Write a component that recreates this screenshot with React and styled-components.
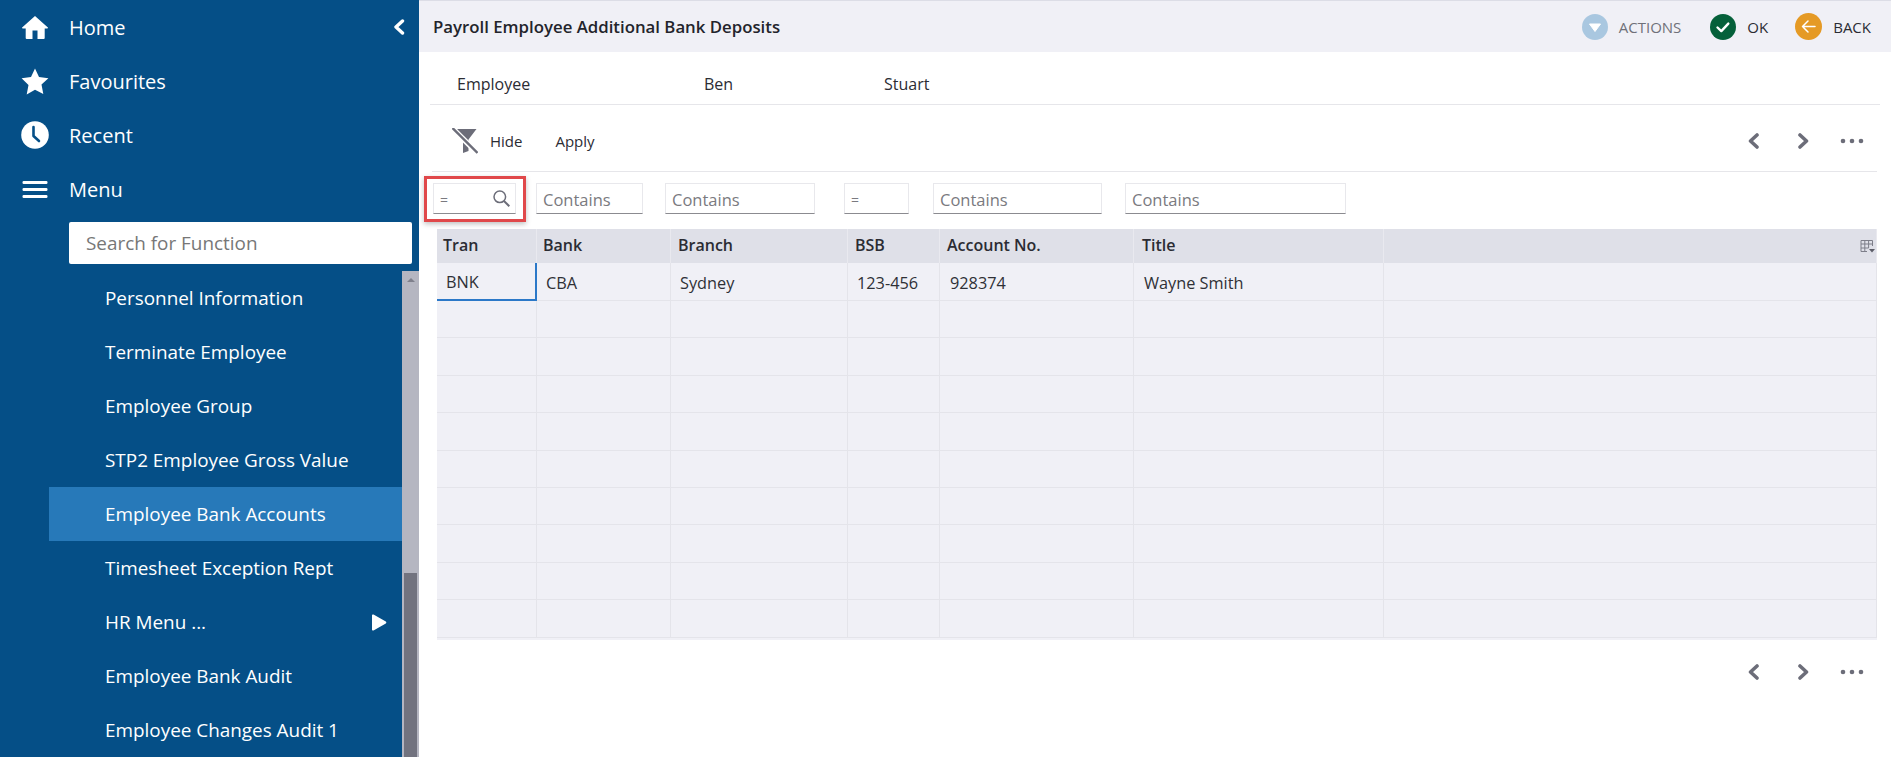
import React from "react";
import styled, { createGlobalStyle } from "styled-components";

const Global = createGlobalStyle`
  html, body { margin: 0; padding: 0; background: #fff; }
  body { font-family: "Open Sans", "Liberation Sans", sans-serif; color: #2b2c33; overflow: hidden; }
  * { box-sizing: border-box; }
`;

const Page = styled.div`
  display: flex;
  width: 1896px;
  height: 757px;
  overflow: hidden;
  background: #fff;
`;

const Sidebar = styled.aside`
  width: 419px;
  flex: none;
  background: #054f87;
  color: #fff;
  display: flex;
  flex-direction: column;
`;

const NavRow = styled.div`
  height: 54px;
  flex: none;
  display: flex;
  align-items: center;
  font-size: 20px;
  padding-left: 22px;
  padding-right: 14px;
`;

const NavIcon = styled.span`
  width: 47px;
  flex: none;
  display: flex;
  align-items: center;
  svg { display: block; }
`;

const Collapse = styled.span`
  margin-left: auto;
  display: flex;
`;

const SearchBox = styled.div`
  margin: 6px 7px 7px 69px;
  height: 42px;
  flex: none;
  background: #fff;
  border-radius: 2px;
  color: #777;
  font-size: 18.9px;
  display: flex;
  align-items: center;
  padding-left: 17px;
`;

const MenuArea = styled.div`
  flex: 1;
  display: flex;
  min-height: 0;
  padding-left: 49px;
`;

const MenuList = styled.div`
  flex: 1;
  display: flex;
  flex-direction: column;
`;

const MenuItem = styled.div`
  height: 54px;
  flex: none;
  display: flex;
  align-items: center;
  padding: 0 15px 0 56px;
  font-size: 18.9px;
  background: ${(p) => (p.$active ? "#2779b9" : "transparent")};
`;

const Arrow = styled.span`
  margin-left: auto;
  display: flex;
`;

const ScrollTrack = styled.div`
  width: 17px;
  flex: none;
  background: #b5b6c1;
  display: flex;
  flex-direction: column;
  align-items: center;
  padding-top: 7px;
`;

const ScrollUp = styled.span`
  width: 0;
  height: 0;
  border-left: 4px solid transparent;
  border-right: 4px solid transparent;
  border-bottom: 4px solid #7f808c;
`;

const ScrollThumb = styled.div`
  width: 13px;
  margin-top: auto;
  height: 184px;
  background: #72737f;
`;

const Main = styled.main`
  flex: 1;
  min-width: 0;
  position: relative;
  display: flex;
  flex-direction: column;
`;

const Header = styled.header`
  width: 1472px;
  height: 52px;
  flex: none;
  background: #f0f0f6;
  border-top: 1px solid #dcdde6;
  display: flex;
  align-items: center;
  padding: 0 20px 0 14px;
`;

const Title = styled.h1`
  margin: 0;
  font-size: 16.8px;
  font-weight: 600;
  color: #23242b;
`;

const Actions = styled.div`
  margin-left: auto;
  display: flex;
  align-items: center;
`;

const ActionButton = styled.div`
  display: flex;
  align-items: center;
  gap: 11px;
  margin-left: ${(p) => p.$gap || 0}px;
  font-size: 15px;
  color: ${(p) => (p.$muted ? "#6f7079" : "#2b2c33")};
  svg { display: block; }
`;

const InfoRow = styled.div`
  height: 53px;
  flex: none;
  margin: 0 16px 0 11px;
  padding-top: 11px;
  border-bottom: 1px solid #e6e6ea;
  display: flex;
  align-items: center;
  font-size: 16px;
`;

const InfoCell = styled.span`
  width: ${(p) => p.$w}px;
  padding-left: ${(p) => p.$pad || 0}px;
`;

const Toolbar = styled.div`
  height: 67px;
  flex: none;
  margin: 0 19px 0 13px;
  border-bottom: 1px solid #e6e6ea;
  display: flex;
  align-items: center;
  font-size: 15px;
  padding: 5px 0 0 20px;
`;

const ToolLabel = styled.span`
  margin-left: ${(p) => p.$gap}px;
`;

const Pager = styled.div`
  margin-left: auto;
  display: flex;
  align-items: center;
  padding-right: 13px;
  svg { display: block; }
`;

const PagerGap = styled.span`
  display: flex;
  margin-left: ${(p) => p.$gap}px;
`;

const FilterRow = styled.div`
  height: 57px;
  flex: none;
  display: flex;
  align-items: flex-start;
  padding: 11px 0 0 14px;
`;

const FilterInput = styled.div`
  width: ${(p) => p.$w}px;
  margin-left: ${(p) => p.$gap || 0}px;
  height: 31px;
  flex: none;
  border: 1px solid #e8e8ec;
  border-bottom: 1px solid #8b8b90;
  color: #7a7a80;
  font-size: ${(p) => (p.$small ? "14px" : "16.5px")};
  display: flex;
  align-items: center;
  padding: 2px 5px 0 6px;
  background: #fff;
`;

const FilterSearch = styled.span`
  margin: -3px 0 0 auto;
  display: flex;
`;

const Highlight = styled.div`
  position: absolute;
  left: 5px;
  top: 176px;
  width: 102px;
  height: 46px;
  border: 3px solid #e0484a;
  box-shadow: 0 2px 5px rgba(0, 0, 0, 0.25);
  pointer-events: none;
`;

const Table = styled.div`
  width: 1440px;
  margin-left: 18px;
  flex: none;
  display: flex;
  flex-direction: column;
  background: #f0f0f6;
  padding-bottom: 2px;
`;

const Row = styled.div`
  display: grid;
  grid-template-columns: 100px 134px 177px 92px 194px 250px 493px;
  height: ${(p) => p.$h}px;
  flex: none;
  background: ${(p) => p.$bg || "transparent"};
`;

const HeadCell = styled.div`
  border-right: 1px solid #e9e9ef;
  font-size: 16px;
  font-weight: 600;
  color: #2b2c33;
  display: flex;
  align-items: center;
  padding: 0 1px 3px ${(p) => p.$pad}px;
`;

const GridIcon = styled.span`
  margin: 3px 0 0 auto;
  display: flex;
`;

const Cell = styled.div`
  border-right: ${(p) => (p.$selected ? "2px solid #2b78c8" : "1px solid #e4e4ea")};
  border-bottom: ${(p) => (p.$selected ? "2px solid #2b78c8" : "1px solid #e4e4ea")};
  font-size: 16.3px;
  color: #2f3036;
  display: flex;
  align-items: center;
  padding: 2px 0 0 ${(p) => p.$pad || 0}px;
`;

const BottomPager = styled.div`
  width: 1440px;
  margin-left: 18px;
  margin-top: 24px;
  display: flex;
`;

const cols = [
  { title: "Tran", hp: 6, cp: 9, val: "BNK" },
  { title: "Bank", hp: 6, cp: 9, val: "CBA" },
  { title: "Branch", hp: 7, cp: 9, val: "Sydney" },
  { title: "BSB", hp: 7, cp: 9, val: "123-456" },
  { title: "Account No.", hp: 7, cp: 10, val: "928374" },
  { title: "Title", hp: 8, cp: 10, val: "Wayne Smith" },
  { title: "", hp: 0, cp: 0, val: "" },
];

const filters = [
  { w: 83, small: true, text: "=", search: true },
  { w: 107, gap: 20, text: "Contains" },
  { w: 150, gap: 22, text: "Contains" },
  { w: 65, gap: 29, small: true, text: "=" },
  { w: 169, gap: 24, text: "Contains" },
  { w: 221, gap: 23, text: "Contains" },
];

const menu = [
  "Personnel Information",
  "Terminate Employee",
  "Employee Group",
  "STP2 Employee Gross Value",
  "Employee Bank Accounts",
  "Timesheet Exception Rept",
  "HR Menu ...",
  "Employee Bank Audit",
  "Employee Changes Audit 1",
];

const HomeIcon = () => (
  <svg width="26" height="23" viewBox="0 0 26 23" fill="#fff">
    <path d="M13 0 25.600 11.200a.7.7 0 0 1-.5 1.300H22.700V22a1 1 0 0 1-1 1H15.500V14.500h-5V23H4.700a1 1 0 0 1-1-1V12.500H.9a.7.7 0 0 1-.5-1.300z" />
  </svg>
);

const StarIcon = () => (
  <svg width="28" height="27" viewBox="0 0 28 27" fill="#fff" style={{ marginLeft: -1 }}>
    <path d="M14 .5l4 8.500 9.400 1.200-6.900 6.400 1.800 9.300L14 21.800l-8.300 4.600 1.800-9.300L.6 10.200 10 9z" />
  </svg>
);

const ClockIcon = () => (
  <svg width="28" height="28" viewBox="0 0 28 28" style={{ marginLeft: -1 }}>
    <circle cx="14" cy="14" r="13.800" fill="#fff" />
    <path d="M12.500 6v9l5.500 5" fill="none" stroke="#054f87" strokeWidth="2.600" strokeLinecap="round" strokeLinejoin="round" />
  </svg>
);

const BarsIcon = () => (
  <svg width="26" height="17" viewBox="0 0 26 17" fill="#fff">
    <rect x="0.500" y="0" width="25" height="3" rx="1.200" />
    <rect x="0.500" y="7" width="25" height="3" rx="1.200" />
    <rect x="0.500" y="14" width="25" height="3" rx="1.200" />
  </svg>
);

const CollapseIcon = () => (
  <svg width="12" height="16" viewBox="0 0 12 16">
    <path d="M9.500 2 3 8l6.500 6" fill="none" stroke="#fff" strokeWidth="3.400" strokeLinecap="round" strokeLinejoin="round" />
  </svg>
);

const PlayIcon = () => (
  <svg width="16" height="17" viewBox="0 0 16 17" fill="#fff">
    <path d="M1 1.500C1 .6 1.800.2 2.500.6l12.300 7c.7.400.7 1.400 0 1.800l-12.300 7C1.800 16.800 1 16.400 1 15.500z" />
  </svg>
);

const ActionsIcon = () => (
  <svg width="26" height="26" viewBox="0 0 26 26">
    <circle cx="13" cy="13" r="13" fill="#a9c7e0" />
    <path d="M7.500 10h11L13 17.500z" fill="#fff" stroke="#fff" strokeLinejoin="round" />
  </svg>
);

const OkIcon = () => (
  <svg width="26" height="26" viewBox="0 0 26 26">
    <circle cx="13" cy="13" r="13" fill="#05603a" />
    <path d="M7.500 13.500l3.800 3.600 7-7.500" fill="none" stroke="#fff" strokeWidth="2.400" strokeLinecap="round" strokeLinejoin="round" />
  </svg>
);

const BackIcon = () => (
  <svg width="27" height="27" viewBox="0 0 27 27">
    <circle cx="13.500" cy="13.500" r="13.500" fill="#e59a25" />
    <path d="M20 13.500H7.500M13 8 7.500 13.500 13 19" fill="none" stroke="#fff" strokeWidth="1.500" strokeLinecap="round" strokeLinejoin="round" />
  </svg>
);

const FilterOffIcon = () => (
  <svg width="26" height="26" viewBox="0 0 26 26">
    <path d="M5 1h19.500L16.500 11.500V23l-5.500 2V11.500z" fill="#6c6d79" />
    <path d="M0 0 26 25.500" stroke="#fff" strokeWidth="5.500" />
    <path d="M0.500 0 25.500 25" stroke="#6c6d79" strokeWidth="2.400" />
  </svg>
);

const Chevron = ({ dir }) => (
  <svg width="13" height="16" viewBox="0 0 13 16">
    <path
      d={dir === "left" ? "M10 2 3.500 8l6.500 6" : "M3 2l6.500 6L3 14"}
      fill="none"
      stroke="#6c6d79"
      strokeWidth="3.600"
      strokeLinecap="round"
      strokeLinejoin="round"
    />
  </svg>
);

const Dots = () => (
  <svg width="24" height="6" viewBox="0 0 24 6" fill="#6c6d79">
    <circle cx="3" cy="3" r="2.300" />
    <circle cx="12" cy="3" r="2.300" />
    <circle cx="21" cy="3" r="2.300" />
  </svg>
);

const SearchIcon = () => (
  <svg width="17" height="17" viewBox="0 0 17 17" fill="none" stroke="#6c6d79" strokeWidth="1.500">
    <circle cx="6.800" cy="6.800" r="5.800" />
    <path d="M11 11l5.300 5.300" strokeWidth="2" />
  </svg>
);

const TableMenuIcon = () => (
  <svg width="15" height="14" viewBox="0 0 15 14" fill="none" stroke="#7d7e89" strokeWidth="1">
    <path d="M1 12.500V1.500h11.500V7M1 5h11.500M4.800 1.500v11M8.600 1.500V9M1 9h7.600M1 12.500h6" />
    <path d="M9 10h6l-3 3.500z" fill="#5c5d68" stroke="none" />
  </svg>
);

const PagerControls = () => (
  <Pager>
    <Chevron dir="left" />
    <PagerGap $gap={37}>
      <Chevron dir="right" />
    </PagerGap>
    <PagerGap $gap={30}>
      <Dots />
    </PagerGap>
  </Pager>
);

export default function App() {
  return (
    <Page>
      <Global />
      <Sidebar>
        <NavRow>
          <NavIcon><HomeIcon /></NavIcon>
          Home
          <Collapse><CollapseIcon /></Collapse>
        </NavRow>
        <NavRow>
          <NavIcon><StarIcon /></NavIcon>
          Favourites
        </NavRow>
        <NavRow>
          <NavIcon><ClockIcon /></NavIcon>
          Recent
        </NavRow>
        <NavRow>
          <NavIcon><BarsIcon /></NavIcon>
          Menu
        </NavRow>
        <SearchBox>Search for Function</SearchBox>
        <MenuArea>
          <MenuList>
            {menu.map((m) => (
              <MenuItem key={m} $active={m === "Employee Bank Accounts"}>
                {m}
                {m === "HR Menu ..." && <Arrow><PlayIcon /></Arrow>}
              </MenuItem>
            ))}
          </MenuList>
          <ScrollTrack>
            <ScrollUp />
            <ScrollThumb />
          </ScrollTrack>
        </MenuArea>
      </Sidebar>
      <Main>
        <Header>
          <Title>Payroll Employee Additional Bank Deposits</Title>
          <Actions>
            <ActionButton $muted><ActionsIcon />ACTIONS</ActionButton>
            <ActionButton $gap={29}><OkIcon />OK</ActionButton>
            <ActionButton $gap={27}><BackIcon />BACK</ActionButton>
          </Actions>
        </Header>
        <InfoRow>
          <InfoCell $w={274} $pad={27}>Employee</InfoCell>
          <InfoCell $w={180}>Ben</InfoCell>
          <InfoCell>Stuart</InfoCell>
        </InfoRow>
        <Toolbar>
          <FilterOffIcon />
          <ToolLabel $gap={12}>Hide</ToolLabel>
          <ToolLabel $gap={33}>Apply</ToolLabel>
          <PagerControls />
        </Toolbar>
        <FilterRow>
          {filters.map((f, i) => (
            <FilterInput key={i} $w={f.w} $gap={f.gap} $small={f.small}>
              {f.text}
              {f.search && <FilterSearch><SearchIcon /></FilterSearch>}
            </FilterInput>
          ))}
        </FilterRow>
        <Highlight />
        <Table>
          <Row $h={34} $bg="#dfe0e8">
            {cols.map((c, i) => (
              <HeadCell key={i} $pad={c.hp}>
                {c.title}
                {i === 6 && <GridIcon><TableMenuIcon /></GridIcon>}
              </HeadCell>
            ))}
          </Row>
          <Row $h={38}>
            {cols.map((c, i) => (
              <Cell key={i} $pad={c.cp} $selected={i === 0}>{c.val}</Cell>
            ))}
          </Row>
          {Array.from({ length: 9 }).map((_, r) => (
            <Row key={r} $h={37.4}>
              {cols.map((_, i) => (
                <Cell key={i} />
              ))}
            </Row>
          ))}
        </Table>
        <BottomPager>
          <PagerControls />
        </BottomPager>
      </Main>
    </Page>
  );
}
